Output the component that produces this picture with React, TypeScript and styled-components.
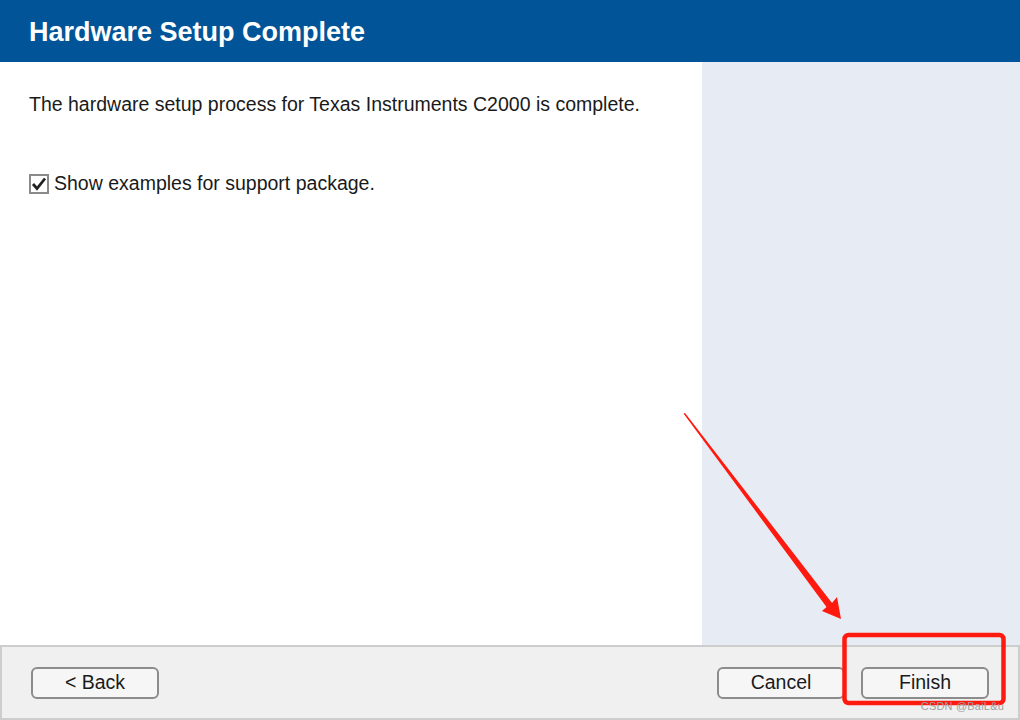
import React from "react";
import styled, { createGlobalStyle } from "styled-components";

const GlobalStyles = createGlobalStyle`
  html, body {
    margin: 0;
    padding: 0;
    width: 1020px;
    height: 720px;
    overflow: hidden;
    font-family: "Liberation Sans", Arial, sans-serif;
  }
`;

const Window = styled.div`
  position: relative;
  display: flex;
  flex-direction: column;
  width: 1020px;
  height: 720px;
  background: #fff;
`;

const Header = styled.div`
  height: 62px;
  flex-shrink: 0;
  display: flex;
  align-items: center;
  padding: 2px 0 0 29px;
  background: #005497;
  color: #fff;
  font-size: 27px;
  font-weight: 700;
  box-sizing: border-box;
`;

const Body = styled.div`
  flex: 1;
  display: flex;
  min-height: 0;
`;

const MainPane = styled.div`
  width: 702px;
  padding: 31px 0 0 29px;
  box-sizing: border-box;
  color: #1a1a1a;
  font-size: 19.5px;
`;

const SidePane = styled.div`
  flex: 1;
  background: #e7ebf3;
`;

const Message = styled.p`
  margin: 0;
  line-height: 22px;
`;

const CheckRow = styled.label`
  display: flex;
  align-items: center;
  gap: 5px;
  margin-top: 57px;
`;

const CheckBox = styled.span`
  width: 20px;
  height: 20px;
  box-sizing: border-box;
  border: 2px solid #8a8a8a;
  background: #fff;
  display: flex;
  align-items: center;
  justify-content: center;
`;

const Footer = styled.div`
  height: 75px;
  flex-shrink: 0;
  display: flex;
  align-items: center;
  padding: 0 29px;
  background: #f0f0f0;
  border: 2px solid #cdcdcd;
  box-sizing: border-box;
`;

const Spacer = styled.div`
  flex: 1;
`;

const Button = styled.button<{ $gap?: number }>`
  width: 128px;
  height: 32px;
  margin-left: ${({ $gap }) => $gap ?? 0}px;
  border: 2px solid #8c8c8c;
  border-radius: 6px;
  background: #f6f6f6;
  color: #1a1a1a;
  font-family: "Liberation Sans", Arial, sans-serif;
  font-size: 19.5px;
  padding: 0;
  cursor: pointer;
`;

const Overlay = styled.svg`
  position: absolute;
  left: 0;
  top: 0;
  pointer-events: none;
`;

const Watermark = styled.span`
  position: absolute;
  right: 16px;
  bottom: 8px;
  font-size: 11px;
  color: #a0a0a0;
  letter-spacing: 0.2px;
`;

export default function App() {
  return (
    <>
      <GlobalStyles />
      <Window>
        <Header>Hardware Setup Complete</Header>
        <Body>
          <MainPane>
            <Message>
              The hardware setup process for Texas Instruments C2000 is complete.
            </Message>
            <CheckRow>
              <CheckBox>
                <svg width="16" height="16" viewBox="0 0 16 16">
                  <path
                    d="M2 8 L6 12.5 L14 2.5"
                    fill="none"
                    stroke="#222"
                    strokeWidth="2.8"
                  />
                </svg>
              </CheckBox>
              Show examples for support package.
            </CheckRow>
          </MainPane>
          <SidePane />
        </Body>
        <Footer>
          <Button>&lt; Back</Button>
          <Spacer />
          <Button>Cancel</Button>
          <Button $gap={16}>Finish</Button>
        </Footer>
        <Overlay width="1020" height="720" viewBox="0 0 1020 720">
          <path
            d="M683.5 413.5 L685 413 L832 603 L837 597 L841 619 L822 611 L826.5 607 Z"
            fill="#ff1a0f"
          />
          <rect
            x="844.5"
            y="635"
            width="159"
            height="68"
            rx="4"
            fill="none"
            stroke="#ff1a0f"
            strokeWidth="4.5"
          />
        </Overlay>
        <Watermark>CSDN @BaiL&amp;u</Watermark>
      </Window>
    </>
  );
}
